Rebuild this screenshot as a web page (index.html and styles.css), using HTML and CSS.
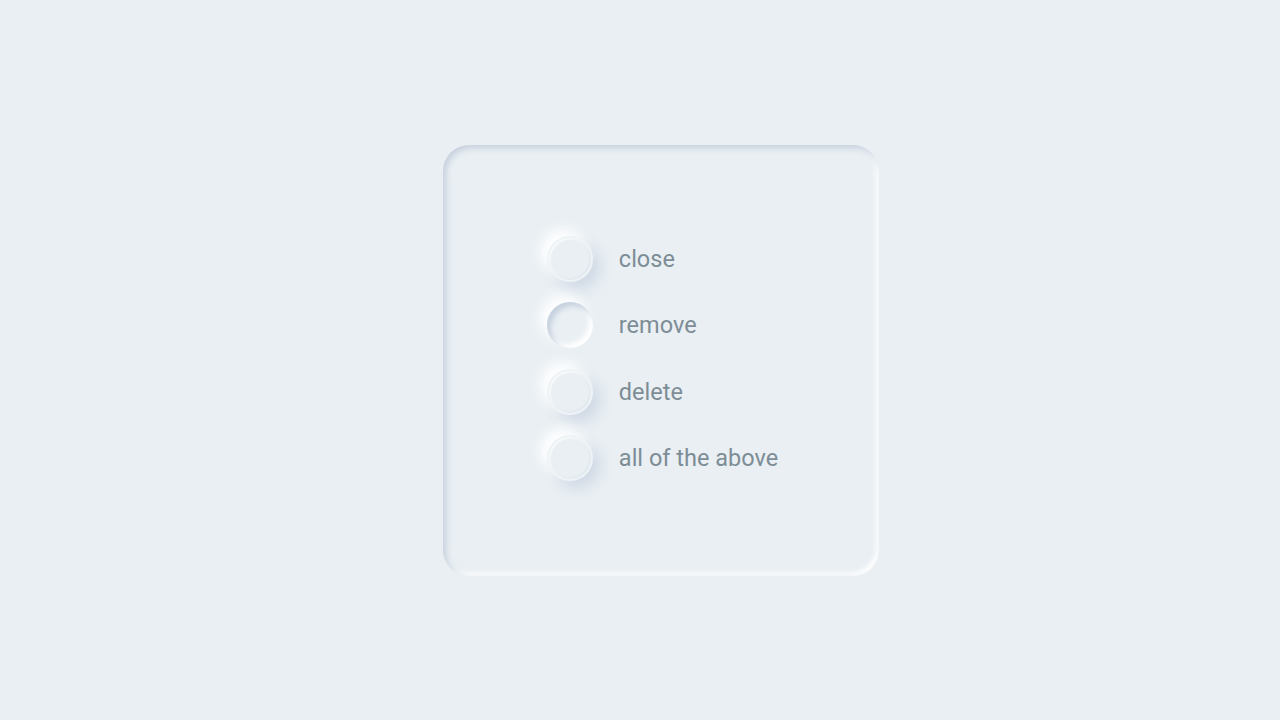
FILE: index.html
```html
<!DOCTYPE html>
<html lang="en">
<head>
<meta charset="utf-8">
<title>Radio</title>
<link rel="stylesheet" href="styles.css">
</head>
<body>
<main class="page">
  <div class="card">
    <ul class="options">
      <li class="option"><span class="radio"></span><span class="label">close</span></li>
      <li class="option"><span class="radio checked"></span><span class="label">remove</span></li>
      <li class="option"><span class="radio"></span><span class="label">delete</span></li>
      <li class="option"><span class="radio"></span><span class="label">all of the above</span></li>
    </ul>
  </div>
</main>
</body>
</html>
```

FILE: styles.css
```css
html, body {
  margin: 0;
  padding: 0;
  background: #e9eff3;
}
.page {
  width: 1280px;
  height: 720px;
  box-sizing: border-box;
  padding: 1px 0 0 42px;
  display: flex;
  align-items: center;
  justify-content: center;
}
.card {
  width: 436px;
  height: 431px;
  box-sizing: border-box;
  border-radius: 26px;
  background: #e9eff3;
  box-shadow: inset 3px 3px 6px #c6d0dd, inset -3px -3px 5px #ffffff;
  display: flex;
  align-items: center;
  justify-content: center;
}
.options {
  list-style: none;
  margin: 0;
  padding: 0 0 4px 3px;
  display: flex;
  flex-direction: column;
  gap: 20.5px;
}
.option {
  display: flex;
  align-items: center;
  gap: 26px;
  height: 46px;
}
.radio {
  width: 46px;
  height: 46px;
  border-radius: 50%;
  box-sizing: border-box;
  background: #e9eff3;
  border: 2px solid #eef3f6;
  box-shadow: -7px -7px 14px #ffffff, 7px 7px 14px #cfd8e5, inset 1px 1px 2px #ffffff, inset -1px -1px 2px #dde4ec;
}
.radio.checked {
  border: none;
  box-shadow: -7px -7px 14px #ffffff, inset 4px 4px 5px #c7d1df, inset -4px -4px 5px #ffffff;
}
.label {
  font-family: Roboto, "Liberation Sans", sans-serif;
  font-size: 23.5px;
  font-weight: 400;
  color: #7d8d96;
}
```
